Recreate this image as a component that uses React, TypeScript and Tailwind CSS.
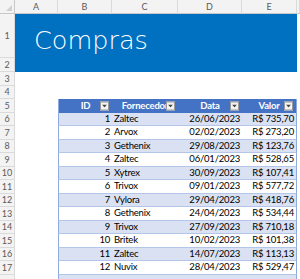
import React from 'react';

// Purchase rows shown in the sheet
const compras = [
  { id: 1, fornecedor: 'Zaltec', data: '26/06/2023', valor: 'R$ 735,70' },
  { id: 2, fornecedor: 'Arvox', data: '02/02/2023', valor: 'R$ 273,20' },
  { id: 3, fornecedor: 'Gethenix', data: '29/08/2023', valor: 'R$ 123,76' },
  { id: 4, fornecedor: 'Zaltec', data: '06/01/2023', valor: 'R$ 528,65' },
  { id: 5, fornecedor: 'Xytrex', data: '30/09/2023', valor: 'R$ 107,41' },
  { id: 6, fornecedor: 'Trivox', data: '09/01/2023', valor: 'R$ 577,72' },
  { id: 7, fornecedor: 'Vylora', data: '29/04/2023', valor: 'R$ 418,76' },
  { id: 8, fornecedor: 'Gethenix', data: '24/04/2023', valor: 'R$ 534,44' },
  { id: 9, fornecedor: 'Trivox', data: '27/09/2023', valor: 'R$ 710,18' },
  { id: 10, fornecedor: 'Britek', data: '10/02/2023', valor: 'R$ 101,38' },
  { id: 11, fornecedor: 'Zaltec', data: '14/07/2023', valor: 'R$ 113,13' },
  { id: 12, fornecedor: 'Nuvix', data: '28/04/2023', valor: 'R$ 529,47' },
];

const RowHeader = ({ n }: { n?: number }) => (
  <div className="flex items-center justify-center bg-[#f3f3f3] border-r border-b border-[#dadada] text-[9px] text-[#5a5a5a]">
    {n}
  </div>
);

const FilterButton = () => (
  <div className="absolute right-[3px] top-1/2 -translate-y-1/2 w-[9px] h-[9px] bg-[#f4f4f4] border border-[#9a9a9a] flex items-center justify-center">
    <svg width="5" height="3" viewBox="0 0 5 3">
      <path d="M0 0h5L2.5 3z" fill="#444" />
    </svg>
  </div>
);

const HeaderCell = ({ label, left, right }: { label: string; left?: boolean; right?: boolean }) => (
  <div
    className={`relative flex items-center justify-center overflow-hidden bg-[#4472C4] text-white font-bold text-[9.5px] tracking-[-0.2px] ${
      left ? 'border-l border-[#8EA9DB]' : ''
    } ${right ? 'border-r border-[#8EA9DB]' : ''}`}
  >
    <span className="whitespace-nowrap">{label}</span>
    <FilterButton />
  </div>
);

const App = () => {
  return (
    <div className="w-[300px] h-[279px] overflow-hidden bg-white font-['Lato','Liberation_Sans',sans-serif]">
      <div className="grid grid-cols-[15px_43px_54px_66px_64px_55px_1fr] grid-rows-[14px_44px_14px_repeat(16,13.5px)]">
        {/* column headers */}
        <div className="relative bg-[#f3f3f3] border-r border-b border-[#c8c8c8]">
          <div className="absolute right-[2px] bottom-[2px] w-0 h-0 border-l-[6px] border-l-transparent border-b-[6px] border-b-[#d0d0d0]" />
        </div>
        {['A', 'B', 'C', 'D', 'E', ''].map((c, i) => (
          <div
            key={i}
            className="flex items-center justify-center bg-[#f3f3f3] border-r border-b border-r-[#dadada] border-b-[#c8c8c8] text-[9px] text-[#5a5a5a]"
          >
            {c}
          </div>
        ))}

        {/* rows 1-2: title band */}
        <RowHeader n={1} />
        <div className="col-span-5 row-span-2 bg-[#0070C0] pl-[19px] pt-[11px]">
          <span className="font-['DejaVu_Sans',sans-serif] font-extralight text-[25.5px] leading-[30px] text-white">
            Compras
          </span>
        </div>
        <div />
        <RowHeader n={2} />
        <div />

        {/* rows 3-4: blank */}
        {[3, 4].map((n) => (
          <React.Fragment key={n}>
            <RowHeader n={n} />
            <div className="col-span-6" />
          </React.Fragment>
        ))}

        {/* row 5: table header */}
        <RowHeader n={5} />
        <div />
        <HeaderCell label="ID" left />
        <HeaderCell label="Fornecedor" />
        <HeaderCell label="Data" />
        <HeaderCell label="Valor" right />
        <div />

        {/* table body */}
        {compras.map((c, i) => {
          const band = c.id % 2 === 1 ? 'bg-[#D9E1F2]' : 'bg-white';
          const cell = `flex items-center text-[9.5px] tracking-[-0.2px] text-black border-b border-[#B4C6E7] whitespace-nowrap overflow-hidden ${band}`;
          return (
            <React.Fragment key={c.id}>
              <RowHeader n={6 + i} />
              <div />
              <div className={`${cell} justify-end pr-[2px] border-l border-l-[#8EA9DB]`}>{c.id}</div>
              <div className={`${cell} pl-[2px]`}>{c.fornecedor}</div>
              <div className={`${cell} justify-end pr-[2px]`}>{c.data}</div>
              <div className={`${cell} justify-end pr-[2px] border-r border-r-[#8EA9DB]`}>{c.valor}</div>
              <div />
            </React.Fragment>
          );
        })}

        {/* row 18, cut off */}
        <RowHeader />
        <div />
        <div className="col-span-4 bg-[#D9E1F2] border-x border-[#8EA9DB]" />
        <div />
      </div>
    </div>
  );
};

export default App;
